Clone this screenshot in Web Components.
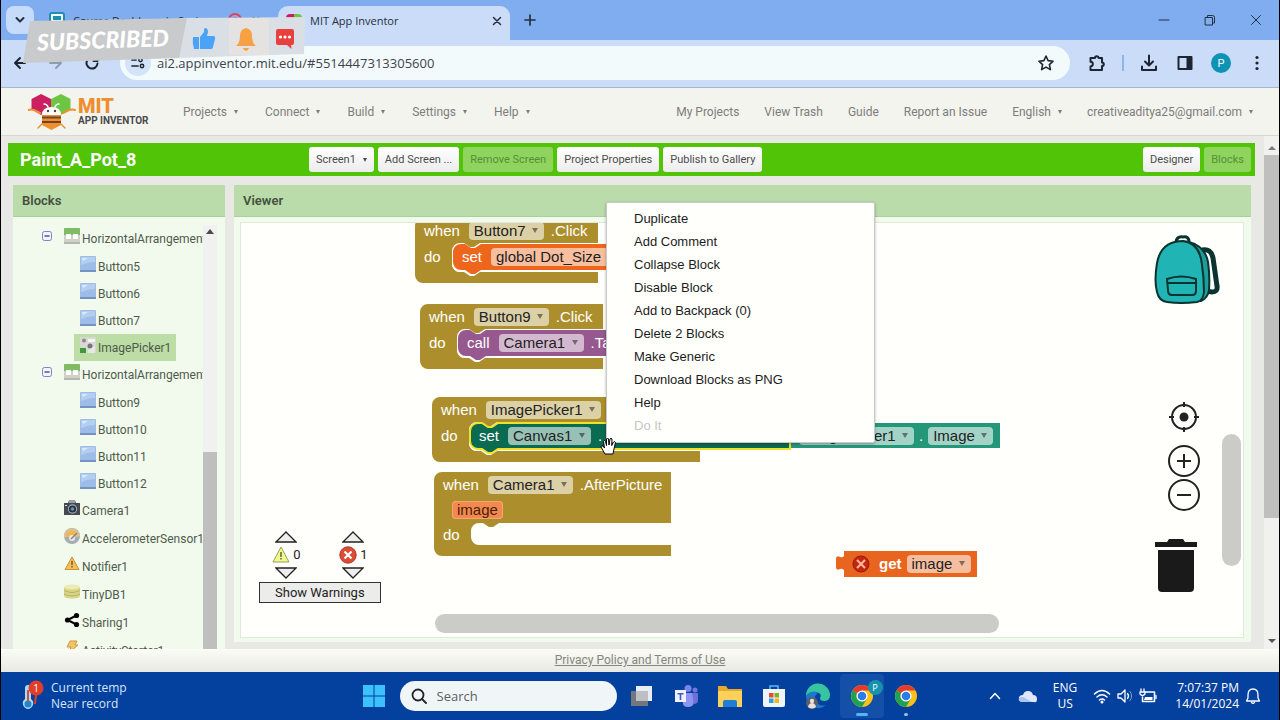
<!DOCTYPE html>
<html lang="en">
<head>
<meta charset="utf-8">
<title>MIT App Inventor</title>
<style>
html, body { height:100%; margin:0; }
body { background:#000; font-family:Roboto, sans-serif; font-size:12px; color:#555; overflow:hidden; }
</style>
</head>
<body>
<app-desktop></app-desktop>

<script>
const base = `
*, *::before, *::after { box-sizing:border-box; }
button, input, select { font:inherit; color:inherit; background:none; border:0; margin:0; padding:0; }
a { color:inherit; }
`;

function define(name, html) {
    customElements.define(name, class extends HTMLElement {
        constructor() {
            super();
            this.attachShadow({mode: 'open'}).innerHTML = `<style>${base}</style>` + html;
        }
    });
}

/* icons: [width, height, markup] */
const stroke = 'fill="none" stroke="currentColor" stroke-linecap="round" stroke-linejoin="round"';
const icons = {
    chevronDown: [12, 12, `<path d="m2.500 4 3.500 3.500L9.500 4" ${stroke} stroke-width="2"/>`],
    chevronUp: [12, 12, `<path d="M1.500 8.500 6 3.500l4.500 5" ${stroke} stroke-width="1.500"/>`],
    minimize: [12, 12, `<path d="M1 6h10" ${stroke}/>`],
    restore: [12, 12, `<path d="M1.500 3.500h7v7.500h-7zM3.500 3.500V1.500h5q2 0 2 2v5.500H8.500" ${stroke}/>`],
    close: [12, 12, `<path d="m1.500 1.500 9 9m0-9-9 9" ${stroke}/>`],
    tabClose: [10, 10, `<path d="m1.500 1.500 7 7m0-7-7 7" ${stroke} stroke-width="1.500"/>`],
    plus: [12, 12, `<path d="M6 1v10M1 6h10" ${stroke} stroke-width="1.700"/>`],
    back: [14, 14, `<path d="M12 7H2m5-5L2 7l5 5" ${stroke} stroke-width="2"/>`],
    forward: [14, 14, `<path d="M1 7h11M7 2l5 5-5 5" ${stroke} stroke-width="2"/>`],
    reload: [14, 14, `<path d="M12.500 7.500a5.500 5.500 0 1 1-2-4.700M12.500 1v4H8.500" ${stroke} stroke-width="2"/>`],
    tune: [14, 14, `<path d="M1 4h4M7 10H1" ${stroke} stroke-width="1.700"/><circle cx="9.500" cy="4" r="1.700" ${stroke} stroke-width="1.500"/><circle cx="11" cy="10" r="1.700" ${stroke} stroke-width="1.500"/>`],
    star: [18, 18, `<path d="m9 2 2.100 4.600 5 .6-3.700 3.400 1 5L9 13.100l-4.400 2.500 1-5L1.900 7.200l5-.6z" ${stroke} stroke-width="1.600"/>`],
    puzzle: [18, 18, `<path d="M2.500 4H7a1.800 1.800 0 0 1 3.600 0H14v4.400a1.800 1.800 0 0 1 0 3.600v4H2.500v-3.600a2.300 2.300 0 0 0 0-4.600z" ${stroke} stroke-width="2"/>`],
    download: [18, 18, `<path d="M9 1.500v10m-4-4 4 4 4-4M2 12.500V16h14v-3.500" ${stroke} stroke-width="2"/>`],
    sidePanel: [16, 16, `<path d="M1.500 2h13v12h-13z" ${stroke} stroke-width="2"/><path d="M9.500 2H15v12H9.500z" fill="currentColor"/>`],
    dots: [4, 16, `<g fill="currentColor"><circle cx="2" cy="2.500" r="1.600"/><circle cx="2" cy="8" r="1.600"/><circle cx="2" cy="13.500" r="1.600"/></g>`],
    tabCard: [16, 16, `<rect x="1" y="1" width="14" height="14" rx="2" fill="#fff" stroke="#1c8fb5" stroke-width="2"/><rect x="4" y="4" width="8" height="4" fill="#1c8fb5"/>`],
    tabRed: [14, 14, `<circle cx="7" cy="7" r="6" fill="none" stroke="#e0405a" stroke-width="2"/><circle cx="7" cy="7" r="3" fill="#e0405a"/>`],
    bee: [48, 38, `
        <path d="m13 1 10 5v10l-10 6-9.500-6V6z" fill="#cc1f62"/>
        <path d="m33 1 9.500 5v10L33 22l-10-6V6z" fill="#6cc644"/>
        <path d="M0 17q3-1 6 0l6 3M47 17q-3-1-6 0l-6 3" fill="none" stroke="#ef9030" stroke-width="2" stroke-linecap="round"/>
        <path d="M14 22q0-8 9.500-8t9.500 8v2H14z" fill="#fff"/>
        <path d="M20 14q-1-3-4-3m11 3q1-3 4-3" fill="none" stroke="#fff" stroke-width="1.500" stroke-linecap="round"/>
        <circle cx="20" cy="18" r="1.200" fill="#444"/><circle cx="27" cy="18" r="1.200" fill="#444"/>
        <path d="M14 22h19v10l-9.500 5-9.500-5z" fill="#ef9030"/>
        <path d="M14 24.500h19M14 29h19" stroke="#71442a" stroke-width="2.200"/>
        <path d="m14 31-4 4m23-4 4 4" stroke="#ef9030" stroke-width="1.500" stroke-linecap="round"/>`],
    thumb: [26, 26, `<path d="M2 11h6v12H3q-2-6-1-12zM9 11l4-5q0-4 1-4 3 0 3 4l-1 4h6q3 0 2 3l-2 8q0 2-3 2H9z" fill="#4ba3f7"/>`],
    bell: [22, 26, `<path d="M11 2q6 1 6 8 0 7 4 10H1q4-3 4-10 0-7 6-8z" fill="#f7a144"/><path d="M8 22h6q-1 3-3 3t-3-3z" fill="#f7a144"/>`],
    comment: [20, 22, `<path d="M3 1h14q2 0 2 2v12q0 2-2 2h-1l.5 4-4.500-4H3q-2 0-2-2V3q0-2 2-2z" fill="#e8403c"/><g fill="#fff"><circle cx="5.500" cy="9" r="1.600"/><circle cx="10" cy="9" r="1.600"/><circle cx="14.500" cy="9" r="1.600"/></g>`],
    minus: [10, 10, `<rect x=".5" y=".5" width="9" height="9" rx="2" fill="#f2f3fb" stroke="#7d83c4"/><path d="M2.500 5h5" stroke="#4b50a0" stroke-width="1.500"/>`],
    arrangement: [16, 16, `<rect width="16" height="16" rx="1" fill="#cfd2c8"/><path d="M0 1q0-1 1-1h14q1 0 1 1v6H0z" fill="#7fba66"/><path d="M2 6h5v5H2zm7 0h5v5H9z" fill="#fbfcf8"/><path d="M0 14h16v2H0z" fill="#b3b6ad"/>`],
    button: [16, 16, `<rect width="16" height="16" rx="1" fill="#9dbde8"/><path d="M1 1h14v5Q8 6 1 9z" fill="#b4cef0"/><path d="M0 14h16v2H0z" fill="#7393c0"/><path d="M2 2h6L3 5z" fill="#dbe9fb"/>`],
    picker: [16, 16, `<rect width="16" height="16" rx="1" fill="#d8d9d3"/><circle cx="4" cy="3.500" r="2" fill="#8a8a86"/><circle cx="10" cy="9" r="2.500" fill="#77757c"/><path d="M8 2h7v3H8z" fill="#f5f5f2"/><path d="M0 11h6v5H0z" fill="#42983a"/><path d="M8 13l7-4v7H8z" fill="#e6e9df"/>`],
    camera: [16, 16, `<path d="M0 3h4l1-2.500h6L12 3h4v12H0z" fill="#454a50"/><path d="M5 1h6v2H5z" fill="#9ba2a9"/><circle cx="8.500" cy="9" r="4.700" fill="#9fabb4"/><circle cx="8.500" cy="9" r="3.600" fill="#27313c"/><circle cx="8.500" cy="9" r="1.800" fill="#5b97bf"/><path d="M1 5h2v1H1z" fill="#ddd"/>`],
    accel: [16, 16, `<circle cx="8" cy="8" r="8" fill="#a9adb0"/><path d="M0 9a8 8 0 0 1 16-1l-4 1H4z" fill="#dcc394"/><path d="M2 9a6 6 0 0 1 11-4l-5 4z" fill="#f0b84e"/><circle cx="8" cy="10" r="3" fill="#e6e9ea"/><path d="m7 11 6-6" stroke="#7d8488" stroke-width="1.500"/>`],
    notifier: [16, 16, `<path d="m8 1 7 12.500H1z" fill="#f3c15c" stroke="#c99034"/><path d="M7.300 5h1.400v4H7.300zm0 5h1.400v1.500H7.300z" fill="#6f5320"/>`],
    db: [16, 16, `<path d="M0 3v9q0 2.500 8 2.500t8-2.500V3z" fill="#d9d68a"/><ellipse cx="8" cy="3" rx="8" ry="2.500" fill="#ecebb4"/><path d="M0 6.500Q8 10.500 16 6.500M0 10q8 4 16 0" fill="none" stroke="#b5b266"/>`],
    share: [16, 16, `<g fill="#000"><circle cx="3.500" cy="8" r="2.600"/><circle cx="12.500" cy="3.500" r="2.600"/><circle cx="12.500" cy="12.500" r="2.600"/></g><path d="m12.500 3.500-9 4.500 9 4.500" fill="none" stroke="#000" stroke-width="2"/>`],
    activity: [16, 16, `<path d="M6 1h7l-2 4h3l-7 6 1 2-5 2 1-6 2 1 1-3H3z" fill="#f2c469" stroke="#cf9840"/>`],
    backpack: [68, 70, `
        <path d="M49 15q9-2 11 8l4 28q1 6-5 6l-6-1" fill="#fff" stroke="#0b332f" stroke-width="5"/>
        <path d="M23 7q1-6 7-5 6-1 6 5" fill="none" stroke="#0b332f" stroke-width="3"/>
        <path d="M36 7q16 4 19 20 2 14 1 28-1 8-8 11H38z" fill="#1b9f9d" stroke="#0b332f" stroke-width="2"/>
        <path d="M30 6Q8 6 4 28 1 46 4 57q2 9 10 10 14 2 30 0 6-1 7-10 0-14-2-27Q47 8 30 6z" fill="#20b4b5" stroke="#0b332f" stroke-width="2"/>
        <path d="M14 44q14-5 29 0v12q0 4-4 4H19q-4 0-4-5zM14 48h29" fill="none" stroke="#0b332f" stroke-width="2"/>`],
    target: [32, 32, `<circle cx="16" cy="16" r="12" fill="none" stroke="#222" stroke-width="2"/><circle cx="16" cy="16" r="4.500" fill="#222"/><path d="M16 1v5m0 20v5M1 16h5m20 0h5" stroke="#222" stroke-width="2"/>`],
    zoomIn: [32, 32, `<circle cx="16" cy="16" r="15" fill="none" stroke="#222" stroke-width="2"/><path d="M16 9v14M9 16h14" stroke="#222" stroke-width="2"/>`],
    zoomOut: [32, 32, `<circle cx="16" cy="16" r="15" fill="none" stroke="#222" stroke-width="2"/><path d="M9 16h14" stroke="#222" stroke-width="2"/>`],
    trash: [42, 54, `<path d="M0 4h12l2-3h14l2 3h12v5H0zM3 12h36v38q0 4-4 4H7q-4 0-4-4z" fill="#1a1a1a"/>`],
    triUp: [22, 12, `<path d="M11 1 21 11H1z" fill="#eee" stroke="#222" stroke-width="1.300"/>`],
    triDown: [22, 12, `<path d="M11 11 21 1H1z" fill="#eee" stroke="#222" stroke-width="1.300"/>`],
    warning: [18, 18, `<path d="m9 1 8 15H1z" fill="#f0fa90" stroke="#98a05c"/><path d="M8.200 6h1.600v5H8.200zm0 6h1.600v1.600H8.200z" fill="#6b7040"/>`],
    error: [18, 18, `<circle cx="9" cy="9" r="8.200" fill="#dd4b34" stroke="#a83c2e"/><path d="m5.500 5.500 7 7m0-7-7 7" stroke="#fff" stroke-width="2.200"/>`],
    errorDark: [18, 18, `<circle cx="9" cy="9" r="8" fill="#c8260c" stroke="#85220d"/><path d="m5 5 8 8m0-8-8 8" stroke="#fbb9a0" stroke-width="2"/>`],
    hand: [18, 18, `<path d="M5 17 1 10q0-2 2-1l1.500 2L3.500 4.500q1-2 2 0l1 4L6.500 2q1-2 2 0l.5 6 1-6q1-1.500 2 0l-.3 6.500L13.500 5q1.500-1 2 .5L14 12l-1 5z" fill="#fff" stroke="#000"/>`],
    weather: [32, 32, `<path d="M6 8q0-3 3-3t3 3v11q3 2 2 6-2 4-5 4t-5-4q-1-4 2-6z" fill="#a8dcf5"/><circle cx="9" cy="24" r="3.500" fill="#1d86cc"/><path d="M8 10h2v12H8z" fill="#d94a3c"/><path d="m17 15-1 9" stroke="#e23c2b" stroke-width="2"/><circle cx="17" cy="8" r="7.500" fill="#e23c2b"/>`],
    windows: [24, 24, `<path d="M1 1h10.500v10.500H1zm11.500 0H23v10.500H12.500zM1 12.500h10.500V23H1zm11.500 0H23V23H12.500z" fill="#3bc1fb"/>`],
    search: [16, 16, `<circle cx="7" cy="7" r="5.500" ${stroke} stroke-width="1.800"/><path d="m11 11 4 4" ${stroke} stroke-width="1.800"/>`],
    taskview: [24, 24, `<path d="M1 7h17v15H1z" fill="#73767a"/><path d="M6 2h16v15H6z" fill="#e9eef2"/><path d="M6 7h12v10H6z" fill="#bcc0c4"/>`],
    teams: [24, 24, `<circle cx="14" cy="4.500" r="3.500" fill="#7b83eb"/><circle cx="21" cy="6" r="2.500" fill="#7078dc"/><path d="M9 9h11v8q0 6-6 6t-5-6z" fill="#8d94ef"/><path d="M18 9h6v7q0 4-4 4z" fill="#6a72d8"/><path d="M1 6h11v12H1z" fill="#eef0fb"/><path d="M3.500 9h6v1.600H7.300V16H5.700v-5.400H3.500z" fill="#4b53bc"/>`],
    folder: [26, 24, `<path d="M1 2h8l2 3h14v18H1z" fill="#e9a92c"/><path d="M1 7h24v16H1z" fill="#fbd15a"/><path d="M6 23v-5q0-2 2-2h10q2 0 2 2v5z" fill="#1f7fd4"/>`],
    store: [24, 24, `<path d="M8 6V2h8v4" fill="none" stroke="#5cb7f0" stroke-width="1.500"/><path d="M1 5h22v16q0 2-2 2H3q-2 0-2-2z" fill="#eef4f7"/><path d="M7 9h4.500v4.500H7z" fill="#e5502c"/><path d="M12.500 9H17v4.500h-4.500z" fill="#7bb32e"/><path d="M7 14.500h4.500V19H7z" fill="#2a9fe4"/><path d="M12.500 14.500H17V19h-4.500z" fill="#f5b51d"/>`],
    edge: [26, 26, `<path d="M1 13A12 12 0 0 1 25 12q0 6-6 6-4 0-4-3 2-3-1-5Q7 7 1 13z" fill="#36c5a0"/><path d="M1 13q6-7 12-3-5 3-2 8 3 6 10 4-4 4-9 3Q1 23 1 13z" fill="#1b78d0"/><circle cx="7" cy="20" r="6" fill="#5b5f66"/><circle cx="7" cy="18" r="2.200" fill="#e9e2dc"/><path d="M3 24q1-4 4-4t4 4q-4 3-8 0z" fill="#e9e2dc"/>`],
    chrome: [24, 24, `
        <circle cx="12" cy="12" r="11" fill="#fbc116"/>
        <path d="M12 12 2.500 6.500A11 11 0 0 1 21.500 6.500H12z" fill="#e33b2e"/>
        <path d="M2.500 6.500A11 11 0 0 0 12 23l4.800-8.300L12 12z" fill="#1fa150"/>
        <circle cx="12" cy="12" r="5.600" fill="#fff"/><circle cx="12" cy="12" r="4.300" fill="#2a7de8"/>`],
    cloud: [20, 16, `<path d="M4 14q-4-1-3-4 0-3 4-3 1-4 5-4t5 4q4 0 4 4t-3 3z" fill="#dfe8fb"/><path d="M4 14q-4-1-3-4 3-2 6 0l7 4z" fill="#a9c3f2"/>`],
    wifi: [18, 16, `<path d="M1.500 6Q9-1 16.500 6M4 9q5-4.500 10 0M6.500 12q2.500-2 5 0" ${stroke} stroke-width="1.500"/><circle cx="9" cy="14" r="1.500" fill="currentColor"/>`],
    volume: [16, 16, `<path d="M1 6h3l4-4v12l-4-4H1zM10.500 5.500q2 2.500 0 5" ${stroke} stroke-width="1.300"/><path d="M13 3.500q3.500 4.500 0 9" ${stroke} opacity=".5"/>`],
    battery: [18, 16, `<path d="M6 4h9.500v9.500h-12V9" ${stroke} stroke-width="1.500"/><path d="M6 9h7.500v3H5z" fill="currentColor"/><path d="M17 7.500v3M2 1v3m3-3v3M1 4h5v2q-2.500 3-5 0z" ${stroke} stroke-width="1.300"/>`],
    bellLine: [16, 18, `<path d="M8 2q5 0 5 6v3l1.500 3h-13L3 11V8q0-6 5-6zM6.500 15.500q1.500 1.500 3 0" ${stroke} stroke-width="1.300"/>`],
};
customElements.define('ui-icon', class extends HTMLElement {
    constructor() {
        super();
        this.attachShadow({mode: 'open'});
    }
    connectedCallback() {
        const [w, h, body] = icons[this.getAttribute('name')];
        this.shadowRoot.innerHTML = `<style>:host{display:block;flex:none} svg{display:block}</style>
            <svg width="${w}" height="${h}" viewBox="0 0 ${w} ${h}" aria-hidden="true">${body}</svg>`;
    }
});

/* browser */
define('tab-strip', `
<style>
:host { display:flex; height:40px; padding:6px 0 0 5px; background:#7fadf0; color:#26303d; font:11px "Open Sans", sans-serif; }
button { display:grid; place-items:center; }
.list { width:28px; height:28px; margin-right:10px; border-radius:8px; background:#c6dafa; }
.tab { display:flex; align-items:center; gap:8px; height:28px; padding:0 8px; white-space:nowrap; }
.first { width:176px; padding-left:5px; }
.second { width:58px; }
.active { width:232px; height:34px; padding-bottom:5px; background:#cadcf8; border-radius:10px 10px 0 0; }
.title { flex:1; }
.fav { width:16px; height:14px; background:linear-gradient(90deg,#cc1f62 50%,#6cc644 50%); border-radius:4px; }
.new { width:40px; height:28px; }
.win { display:flex; margin-left:auto; }
.win button { width:46px; height:28px; }
</style>
<button class=list aria-label="Search tabs"><ui-icon name=chevronDown></ui-icon></button>
<div class="tab first"><ui-icon name=tabCard></ui-icon><span class=title>Course Dashboard - Scal</span></div>
<div class="tab second"><ui-icon name=tabRed></ui-icon><span class=title>Al</span></div>
<div class="tab active"><span class=fav></span><span class=title>MIT App Inventor</span><button aria-label="Close tab"><ui-icon name=tabClose></ui-icon></button></div>
<button class=new aria-label="New tab"><ui-icon name=plus></ui-icon></button>
<div class=win>
    <button aria-label=Minimize><ui-icon name=minimize></ui-icon></button>
    <button aria-label=Restore><ui-icon name=restore></ui-icon></button>
    <button aria-label=Close><ui-icon name=close></ui-icon></button>
</div>`);

define('browser-toolbar', `
<style>
:host { display:flex; align-items:center; height:48px; padding:0 4px 1px 1px; background:#cadcf8; border-bottom:1px solid #a5b5ca; color:#1f2530; }
button { display:grid; place-items:center; width:36px; height:36px; }
.fwd { color:#8f9bb0; }
.omni { display:flex; align-items:center; flex:1; height:34px; margin:0 9px 0 10px; padding:0 6px 0 5px; background:#f3fafc; border-radius:17px; }
.site { width:26px; height:26px; border-radius:50%; background:#d3e3f8; margin-right:6px; }
input { flex:1; min-width:0; font:13px "Open Sans", sans-serif; color:#3d454c; outline:0; }
hr { width:2px; height:16px; margin:0 7px; border:0; background:#8db6f0; }
.avatar { display:grid; place-items:center; width:20px; height:20px; border-radius:50%; background:#0f93b5; color:#fff; font-size:11px; }
</style>
<button aria-label=Back><ui-icon name=back></ui-icon></button>
<button class=fwd aria-label=Forward><ui-icon name=forward></ui-icon></button>
<button aria-label=Reload><ui-icon name=reload></ui-icon></button>
<div class=omni>
    <button class=site aria-label="Site information"><ui-icon name=tune></ui-icon></button>
    <input aria-label=Address value="ai2.appinventor.mit.edu/#5514447313305600">
    <button aria-label=Bookmark><ui-icon name=star></ui-icon></button>
</div>
<button aria-label=Extensions><ui-icon name=puzzle></ui-icon></button>
<hr>
<button aria-label=Downloads><ui-icon name=download></ui-icon></button>
<button aria-label="Side panel"><ui-icon name=sidePanel></ui-icon></button>
<button aria-label=Profile><span class=avatar>P</span></button>
<button aria-label=Menu><ui-icon name=dots></ui-icon></button>`);

/* sticker laid over the tab strip */
define('subscribe-banner', `
<style>
:host { position:absolute; left:22px; top:17px; display:grid; }
:host > * { grid-area:1/1; }
.shape { display:block; }
.row { display:flex; align-items:center; height:44px; padding-left:14px; }
.word { width:154px; font:italic 900 23px Lato, sans-serif; color:#fff; rotate:-2deg; }
ui-icon { margin-right:18px; }
</style>
<svg class=shape width="284" height="48" aria-hidden="true">
    <path d="M156 1 282 0l-1 37-126 4z" fill="#dadfe6"/><path d="M206 1h40v37h-40z" fill="#e4e3e2"/>
    <path d="M7 4 164 1l-8 40L0 46z" fill="#c9cacb"/>
</svg>
<div class=row>
    <span class=word>SUBSCRIBED</span>
    <ui-icon name=thumb></ui-icon><ui-icon name=bell></ui-icon><ui-icon name=comment></ui-icon>
</div>`);

/* app inventor */
define('menu-button', `
<style>
:host { display:block; }
button { display:flex; align-items:center; gap:7px; height:100%; white-space:nowrap; }
i { border:2px solid transparent; border-top:4px solid; border-bottom:0; }
</style>
<button aria-haspopup=menu><slot></slot><i></i></button>`);

define('app-header', `
<style>
:host { display:flex; align-items:center; height:48px; padding:0 26px 0 27px; background:#f4f4ef; border-bottom:1px solid #d8d8d3; color:#7d7d7b; }
.logo { display:flex; align-items:center; gap:2px; width:155px; text-decoration:none; }
.name { display:grid; color:#4a4a4a; font-weight:700; font-size:10px; line-height:12px; white-space:nowrap; }
.name b { font-size:20px; line-height:18px; color:#ee8f2f; font-weight:900; }
nav { display:flex; gap:27px; }
nav + nav { margin-left:auto; gap:25px; }
a { text-decoration:none; white-space:nowrap; }
</style>
<a class=logo href="#"><ui-icon name=bee></ui-icon><span class=name><b>MIT</b><span>APP INVENTOR</span></span></a>
<nav>
    <menu-button>Projects</menu-button><menu-button>Connect</menu-button><menu-button>Build</menu-button>
    <menu-button>Settings</menu-button><menu-button>Help</menu-button>
</nav>
<nav>
    <a href="#">My Projects</a><a href="#">View Trash</a><a href="#">Guide</a><a href="#">Report an Issue</a>
    <menu-button>English</menu-button><menu-button>creativeaditya25@gmail.com</menu-button>
</nav>`);

define('project-bar', `
<style>
:host { display:flex; align-items:center; gap:4px; height:33px; padding:0 4px 0 12px; background:#52c408; }
h1 { flex:0 0 285px; margin:0; color:#fff; font-size:18px; line-height:33px; font-weight:700; }
button, menu-button { height:25px; padding:0 7px; border-radius:3px; background:linear-gradient(#fff,#ececec); color:#4c4c4c; font-size:11px; line-height:25px; white-space:nowrap; }
button:disabled { background:#8ed45f; color:#568f38; }
.end { margin-left:auto; }
</style>
<h1>Paint_A_Pot_8</h1>
<menu-button>Screen1</menu-button>
<button>Add Screen ...</button>
<button disabled>Remove Screen</button>
<button>Project Properties</button>
<button>Publish to Gallery</button>
<button class=end>Designer</button>
<button disabled>Blocks</button>`);

define('side-panel', `
<style>
:host { display:flex; flex-direction:column; min-width:0; min-height:0; background:#f1faed; }
h2 { flex:none; height:32px; margin:0; padding-left:9px; background:#b9dcaa; border-bottom:1px solid #a9cf9c; color:#454f41; font-size:13px; line-height:31px; font-weight:600; }
</style>
<h2><slot name=title></slot></h2>
<slot></slot>`);

customElements.define('tree-row', class extends HTMLElement {
    constructor() {
        super();
        this.attachShadow({mode: 'open'});
    }
    connectedCallback() {
        const open = this.hasAttribute('open');
        this.shadowRoot.innerHTML = `<style>${base}
        :host { display:flex; align-items:center; height:28px; padding-left:45px; white-space:nowrap; color:#4f5a4c; }
        :host([open]) { padding-left:29px; }
        :host([nested]) { height:27px; padding-left:61px; }
        button { width:10px; height:10px; margin:0 6px 6px 0; display:block; }
        span { display:flex; align-items:center; gap:2px; height:27px; padding:0 5px 0 6px; }
        :host([selected]) span { background:#bcdda5; }
        ui-icon { margin-bottom:6px; }
        </style>
        ${open ? '<button aria-label=Collapse><ui-icon name=minus></ui-icon></button>' : ''}
        <span><ui-icon name="${this.getAttribute('icon')}"></ui-icon><slot></slot></span>`;
        this.setAttribute('role', 'treeitem');
    }
});

define('component-tree', `
<style>
:host { display:flex; flex:1; min-height:0; padding:8px 8px 0 0; }
.rows { flex:1; min-width:0; overflow:hidden; }
.bar { flex:none; width:14px; background:#f1f1f0; display:flex; flex-direction:column; align-items:center; justify-content:space-between; padding-top:4px; }
.bar i { border:4px solid transparent; border-bottom:5px solid #4a4a4a; border-top:0; }
.thumb { width:14px; height:47%; background:#bfc0bd; }
</style>
<div class=rows role=tree>
    <tree-row open icon=arrangement>HorizontalArrangement3</tree-row>
    <tree-row nested icon=button>Button5</tree-row>
    <tree-row nested icon=button>Button6</tree-row>
    <tree-row nested icon=button>Button7</tree-row>
    <tree-row nested selected icon=picker>ImagePicker1</tree-row>
    <tree-row open icon=arrangement>HorizontalArrangement4</tree-row>
    <tree-row nested icon=button>Button9</tree-row>
    <tree-row nested icon=button>Button10</tree-row>
    <tree-row nested icon=button>Button11</tree-row>
    <tree-row nested icon=button>Button12</tree-row>
    <tree-row icon=camera>Camera1</tree-row>
    <tree-row icon=accel>AccelerometerSensor1</tree-row>
    <tree-row icon=notifier>Notifier1</tree-row>
    <tree-row icon=db>TinyDB1</tree-row>
    <tree-row icon=share>Sharing1</tree-row>
    <tree-row icon=activity>ActivityStarter1</tree-row>
</div>
<div class=bar><i></i><div class=thumb></div></div>`);

/* drop-down inside a block */
customElements.define('block-field', class extends HTMLElement {
    constructor() {
        super();
        const value = this.getAttribute('value');
        this.attachShadow({mode: 'open'}).innerHTML = `<style>${base}
        :host { display:inline-grid; align-items:center; height:18px; border-radius:4px; background:rgba(255,255,255,.58); color:#222; }
        select, i { grid-area:1/1; }
        select { appearance:none; height:18px; padding:0 18px 0 5px; line-height:18px; }
        i { justify-self:end; margin-right:6px; border:3px solid transparent; border-top:5px solid rgba(0,0,0,.45); border-bottom:0; pointer-events:none; }
        </style>
        <select aria-label="${value}"><option>${value}</option></select><i></i>`;
    }
});

/* block outlines */
const outline = {
    // w: top width, f: foot width, h: height, m: top of the do socket
    event: ({w, f, h, m}) => `M8 0H${w}V${m}H65l-6 4h-4l-6-4H45a8 8 0 0 0-8 8V${h - 19}a8 8 0 0 0 8 8H${f}V${h}H8a8 8 0 0 1-8-8V8a8 8 0 0 1 8-8z`,
    statement: ({w, h}) => `M8 0h4l6 4h4l6-4H${w}V${h}H28l-6 4h-4l-6-4H8a8 8 0 0 1-8-8V8a8 8 0 0 1 8-8z`,
    value: ({w, h}) => `M0 0H${w}V${h}H0V19q-2-2-4-1-4 2-4-2V8q0-4 4-2 3 1 4-1z`,
};
customElements.define('code-block', class extends HTMLElement {
    constructor() {
        super();
        this.attachShadow({mode: 'open'});
    }
    connectedCallback() {
        const n = k => Number(this.getAttribute(k));
        const kind = this.getAttribute('kind');
        const size = {w: n('w'), f: n('f') || n('w'), h: n('h'), m: n('m') || 25};
        const d = outline[kind](size);
        this.shadowRoot.innerHTML = `<style>${base}
        :host { display:block; position:relative; width:${Math.max(size.w, size.f)}px; height:${size.h}px; color:#fff; white-space:nowrap; }
        svg { position:absolute; inset:0; overflow:visible; }
        .body { position:relative; padding-left:${kind === 'event' ? 9 : 0}px; }
        </style>
        <svg width="${size.w}" height="${size.h}" aria-hidden="true">
            ${kind === 'statement' ? `<path d="${d}" transform="translate(-1 2)" fill="#fff"/>` : ''}
            <path d="${d}" fill="${this.getAttribute('fill')}" stroke="${this.getAttribute('line') || 'none'}" stroke-width="2"/>
        </svg>
        <div class=body><slot></slot></div>`;
    }
});

define('block-warnings', `
<style>
:host { display:grid; justify-items:center; gap:3px; color:#222; font:13px Roboto, sans-serif; }
.counts { display:flex; gap:39px; }
.count { display:grid; justify-items:center; gap:3px; width:28px; }
.value { display:flex; align-items:center; gap:3px; height:18px; line-height:18px; }
.show { height:21px; padding:0 15px; border:1px solid #333; background:#ececea; line-height:17px; }
</style>
<div class=counts>
    <div class=count><button aria-label="Previous warning"><ui-icon name=triUp></ui-icon></button>
        <span class=value><ui-icon name=warning></ui-icon>0</span>
        <button aria-label="Next warning"><ui-icon name=triDown></ui-icon></button></div>
    <div class=count><button aria-label="Previous error"><ui-icon name=triUp></ui-icon></button>
        <span class=value><ui-icon name=error></ui-icon>1</span>
        <button aria-label="Next error"><ui-icon name=triDown></ui-icon></button></div>
</div>
<button class=show>Show Warnings</button>`);

define('block-workspace', `
<style>
:host { display:block; position:relative; flex:1; min-height:0; margin:5px 7px 4px 6px; overflow:hidden; background:#fffffb; border:1px solid #dfeadb; font:15px "Liberation Sans", Arial, sans-serif; }
.at { position:absolute; }
.line { display:flex; align-items:center; gap:7px; height:25px; }
.line block-field { margin-left:2px; }
.do { height:27px; gap:0; }
.do > span { flex:0 0 29px; }
.param { height:26px; }
.param span { margin-left:9px; padding:0 5px; line-height:18px; border-radius:4px; background:#f3894f; box-shadow:inset 0 0 0 1px #f7a578; color:#4a1d08; }
.empty { height:23px; }
.stmt { height:26px; padding-left:9px; }
.val { padding-left:8px; gap:5px; }
.val block-field { margin-left:0; }
.val b { margin-left:4px; }
.h, .v { border-radius:10px; background:#cbccc8; }
.h { left:194px; right:244px; height:19px; bottom:4px; }
.v { right:2px; top:211px; width:19px; height:132px; }
.zoom { display:grid; gap:2px; }
.zoom button:first-child { margin-bottom:10px; }
</style>
<code-block class=at style="left:174px;top:-5px" kind=event w=183 h=65 fill="#ac8f2c">
    <div class=line>when <block-field value=Button7></block-field><span>.Click</span></div>
    <div class="line do"><span>do</span>
        <code-block kind=statement w=230 h=26 fill="#ee661c">
            <div class="line stmt">set <block-field value="global Dot_Size"></block-field></div>
        </code-block></div>
</code-block>
<code-block class=at style="left:179px;top:81px" kind=event w=183 h=65 fill="#ac8f2c">
    <div class=line>when <block-field value=Button9></block-field><span>.Click</span></div>
    <div class="line do"><span>do</span>
        <code-block kind=statement w=210 h=26 fill="#96588e">
            <div class="line stmt">call <block-field value=Camera1></block-field><span>.TakePicture</span></div>
        </code-block></div>
</code-block>
<code-block class=at style="left:191px;top:174px" kind=event w=268 h=65 fill="#ac8f2c">
    <div class=line>when <block-field value=ImagePicker1></block-field></div>
    <div class="line do"><span>do</span>
        <code-block kind=statement w=320 h=26 fill="#0b6b50" line="#efe02a">
            <div class="line stmt">set <block-field value=Canvas1></block-field><span>.</span></div>
        </code-block></div>
</code-block>
<code-block class=at style="left:550px;top:200px" kind=value w=209 h=25 fill="#24977b">
    <div class="line val"><block-field value=ImagePicker1></block-field><span>.</span><block-field value=Image></block-field></div>
</code-block>
<code-block class=at style="left:193px;top:249px" kind=event w=237 h=84 m=51 fill="#ac8f2c">
    <div class=line>when <block-field value=Camera1></block-field><span>.AfterPicture</span></div>
    <div class="line param"><span>image</span></div>
    <div class="line empty">do</div>
</code-block>
<code-block class=at style="left:603px;top:328px" kind=value w=133 h=26 fill="#e9641f">
    <div class="line val"><ui-icon name=errorDark></ui-icon><b>get</b><block-field value=image></block-field></div>
</code-block>
<block-warnings class=at style="left:18px;bottom:34px"></block-warnings>
<ui-icon class=at name=backpack style="right:22px;top:12px"></ui-icon>
<div class="at zoom" style="right:43px;top:178px">
    <button aria-label="Center blocks"><ui-icon name=target></ui-icon></button>
    <button aria-label="Zoom in"><ui-icon name=zoomIn></ui-icon></button>
    <button aria-label="Zoom out"><ui-icon name=zoomOut></ui-icon></button>
</div>
<ui-icon class=at name=trash style="right:46px;top:315px"></ui-icon>
<div class="at h"></div>
<div class="at v"></div>`);

define('context-menu', `
<style>
:host { display:flex; flex-direction:column; padding:4px 0 5px; background:#fffffb; border:1px solid #c9c9c9; border-radius:2px; box-shadow:0 1px 3px rgba(0,0,0,.3); font:13px "Liberation Sans", Arial, sans-serif; color:#1c1c1c; }
button { height:23px; padding-left:27px; text-align:left; }
button:disabled { color:#c6c6c4; }
</style>
<button role=menuitem>Duplicate</button>
<button role=menuitem>Add Comment</button>
<button role=menuitem>Collapse Block</button>
<button role=menuitem>Disable Block</button>
<button role=menuitem>Add to Backpack (0)</button>
<button role=menuitem>Delete 2 Blocks</button>
<button role=menuitem>Make Generic</button>
<button role=menuitem>Download Blocks as PNG</button>
<button role=menuitem>Help</button>
<button role=menuitem disabled>Do It</button>`);

define('app-page', `
<style>
:host { display:flex; min-height:0; flex:1; background:#e8e8e4; }
main { flex:1; min-width:0; display:flex; flex-direction:column; padding:7px 9px 0 7px; }
.panels { flex:1; min-height:0; display:flex; gap:9px; padding:9px 4px 0 5px; }
.blocks { flex:0 0 212px; }
.viewer { flex:1; margin-bottom:7px; position:relative; }
context-menu { position:absolute; left:372px; top:17px; width:269px; }
.hand { position:absolute; left:366px; top:252px; }
.scroll { flex:none; width:15px; background:#f1f1ee; display:flex; flex-direction:column; align-items:center; padding:10px 0 6px; gap:5px; }
.scroll i { border:4px solid transparent; border-bottom:4px solid #7c7c7a; border-top:0; }
.scroll i:last-child { border-bottom:0; border-top:4px solid #555; margin-top:auto; }
.thumb { width:15px; height:73%; background:#bfc0bd; }
</style>
<main>
    <project-bar></project-bar>
    <div class=panels>
        <side-panel class=blocks><span slot=title>Blocks</span><component-tree></component-tree></side-panel>
        <side-panel class=viewer><span slot=title>Viewer</span>
            <block-workspace></block-workspace>
            <context-menu role=menu></context-menu>
            <ui-icon class=hand name=hand></ui-icon>
        </side-panel>
    </div>
</main>
<div class=scroll><i></i><div class=thumb></div><i></i></div>`);

define('page-footer', `
<style>
:host { display:block; height:23px; background:linear-gradient(#fbfcf6,#e8e9e2); text-align:center; font-size:12px; line-height:23px; color:#85857f; }
</style>
<a href="#">Privacy Policy and Terms of Use</a>`);

/* desktop */
define('task-bar', `
<style>
:host { display:grid; grid-template-columns:1fr auto 1fr; align-items:center; height:48px; padding:0 18px; background:#04409e; color:#fff; font:12px/16px "Open Sans", sans-serif; }
.weather { display:flex; align-items:center; text-align:left; color:#d7e6fa; }
.temp { display:grid; } .temp > * { grid-area:1/1; }
.badge { width:14px; margin-left:10px; text-align:center; font-size:10px; line-height:16px; color:#fff; }
.apps, .tray { display:flex; align-items:center; }
.apps { padding-left:7px; }
.apps button { display:grid; place-items:center; position:relative; width:44px; height:44px; }
.apps .start { width:28px; margin-right:12px; }
label { display:flex; align-items:center; gap:10px; width:217px; height:30px; margin-right:3px; padding-left:11px; border-radius:15px; background:#f0f6f8; color:#222; }
input { width:150px; font-size:13px; outline:0; }
input::placeholder { color:#5c6063; opacity:1; }
.on { background:#1450a8; border-radius:4px; }
.on::after, .open::after { content:''; position:absolute; bottom:2px; width:12px; height:3px; border-radius:2px; background:#56b4f5; }
.open::after { width:4px; background:#9fb9dc; }
.p { position:absolute; right:1px; top:6px; width:15px; height:15px; border-radius:50%; background:#1792ad; font-size:9px; line-height:15px; }
.tray { justify-content:flex-end; text-align:center; gap:6px; }
.lang { margin:0 10px 0 9px; }
.cloud { margin-left:11px; }
.time { text-align:right; margin-left:12px; }
</style>
<button class=weather><span class=temp><ui-icon name=weather></ui-icon><span class=badge>1</span></span><span>Current temp<br>Near record</span></button>
<div class=apps>
    <button class=start aria-label=Start><ui-icon name=windows></ui-icon></button>
    <label><ui-icon name=search></ui-icon><input type=search placeholder=Search aria-label=Search></label>
    <button aria-label="Task view"><ui-icon name=taskview></ui-icon></button>
    <button aria-label=Teams><ui-icon name=teams></ui-icon></button>
    <button aria-label="File Explorer"><ui-icon name=folder></ui-icon></button>
    <button aria-label=Store><ui-icon name=store></ui-icon></button>
    <button aria-label=Edge><ui-icon name=edge></ui-icon></button>
    <button class=on aria-label=Chrome><ui-icon name=chrome></ui-icon><span class=p>P</span></button>
    <button class=open aria-label=Chrome><ui-icon name=chrome></ui-icon></button>
</div>
<div class=tray>
    <ui-icon name=chevronUp></ui-icon><ui-icon class=cloud name=cloud></ui-icon>
    <span class=lang>ENG<br>US</span>
    <ui-icon name=wifi></ui-icon><ui-icon name=volume></ui-icon><ui-icon name=battery></ui-icon>
    <span class=time>7:07:37 PM<br>14/01/2024</span>
    <ui-icon name=bellLine></ui-icon>
</div>`);

define('app-desktop', `
<style>
:host { display:flex; flex-direction:column; height:100vh; position:relative; border:solid #000; border-width:0 1px; }
:host > * { flex-shrink:0; }
app-page { flex-shrink:1; }
</style>
<tab-strip></tab-strip>
<browser-toolbar></browser-toolbar>
<app-header></app-header>
<app-page></app-page>
<page-footer></page-footer>
<task-bar></task-bar>
<subscribe-banner></subscribe-banner>`);
</script>
</body>
</html>
